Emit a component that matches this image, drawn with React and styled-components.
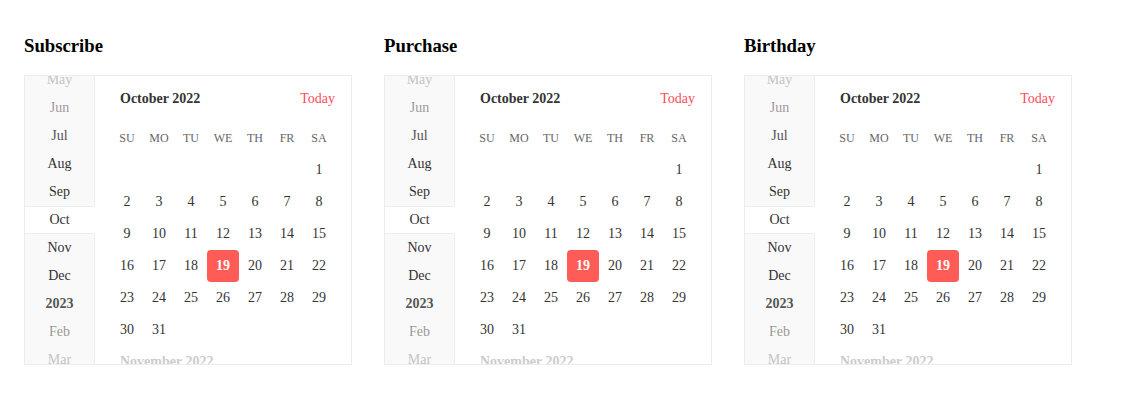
import React, { useLayoutEffect, useRef } from "react";
import styled, { createGlobalStyle } from "styled-components";

const GlobalStyle = createGlobalStyle`
    body {
        margin: 0;
        background: #fff;
        font-family: "Liberation Serif", "Times New Roman", serif;
        color: #333;
    }
`

const WEEKDAYS = ["SU", "MO", "TU", "WE", "TH", "FR", "SA"];

// month list shown in the left rail, year labels replace January
const MONTHS = [
    { label: "2022", year: true },
    { label: "Feb" }, { label: "Mar" }, { label: "Apr" }, { label: "May" },
    { label: "Jun" }, { label: "Jul" }, { label: "Aug" }, { label: "Sep" },
    { label: "Oct" }, { label: "Nov" }, { label: "Dec" },
    { label: "2023", year: true },
    { label: "Feb" }, { label: "Mar" }, { label: "Apr" }, { label: "May" },
];
const ACTIVE = 9;
const FADE = ["#333", "#333", "#333", "#555", "#999", "#c4c4c4", "#ddd"];

const buildDays = (offset, count) => {
    const cells = [];
    for (let i = 0; i < offset; i++) cells.push(null);
    for (let d = 1; d <= count; d++) cells.push(d);
    return cells;
}

const MonthRail = () => {
    const ref = useRef(null);

    useLayoutEffect(() => {
        if (ref.current) ref.current.scrollTop = 122;
    }, []);

    return (
        <Rail ref={ref}>
            {MONTHS.map((m, i) => {
                const dist = Math.min(Math.abs(i - ACTIVE), FADE.length - 1);
                return (
                    <RailItem key={i} $active={i === ACTIVE} $year={m.year} $color={FADE[dist]}>
                        {m.label}
                    </RailItem>
                )
            })}
        </Rail>
    )
}

const MonthGrid = ({ title, offset, count, selected, muted }) => {
    return (
        <>
            <MonthTitle $muted={muted}>{title}</MonthTitle>
            <DayGrid>
                {buildDays(offset, count).map((d, i) => (
                    <Day key={i} $selected={d === selected}>{d}</Day>
                ))}
            </DayGrid>
        </>
    )
}

const Picker = ({ title }) => {
    return (
        <Block>
            <Heading>{title}</Heading>
            <Card>
                <MonthRail />
                <Pane>
                    <Header>
                        <HeaderTitle>October 2022</HeaderTitle>
                        <TodayLink>Today</TodayLink>
                    </Header>
                    <Weekdays>
                        {WEEKDAYS.map(w => <Weekday key={w}>{w}</Weekday>)}
                    </Weekdays>
                    <Body>
                        <DayGrid>
                            {buildDays(6, 31).map((d, i) => (
                                <Day key={i} $selected={d === 19}>{d}</Day>
                            ))}
                        </DayGrid>
                        <MonthGrid title="November 2022" offset={2} count={30} muted />
                    </Body>
                </Pane>
            </Card>
        </Block>
    )
}

const App = () => {
    return (
        <>
            <GlobalStyle />
            <Page>
                <Picker title="Subscribe" />
                <Picker title="Purchase" />
                <Picker title="Birthday" />
            </Page>
        </>
    )
}

const Page = styled.div`
    display: flex;
    gap: 32px;
    padding: 35px 24px 0;
`

const Block = styled.div`
    display: flex;
    flex-direction: column;
`

const Heading = styled.h3`
    margin: 0 0 18px;
    font-size: 18.72px;
    line-height: 22px;
    font-weight: bold;
    color: #000;
`

const Card = styled.div`
    display: flex;
    width: 328px;
    height: 290px;
    box-sizing: border-box;
    border: 1px solid #ececec;
    background: #fff;
    overflow: hidden;
`

////////////////

const Rail = styled.div`
    width: 70px;
    flex-shrink: 0;
    overflow-y: auto;
    background: #f9f9f9;
    scrollbar-width: none;
    &::-webkit-scrollbar {
        display: none;
    }
`

const RailItem = styled.div`
    height: 28px;
    box-sizing: border-box;
    display: flex;
    align-items: center;
    justify-content: center;
    font-size: 14px;
    font-weight: ${p => p.$year ? "bold" : "normal"};
    color: ${p => p.$color};
    background: ${p => p.$active ? "#fff" : "transparent"};
    border-right: ${p => p.$active ? "1px solid transparent" : "1px solid #ececec"};
    border-top: ${p => p.$active ? "1px solid #ececec" : "none"};
    border-bottom: ${p => p.$active ? "1px solid #ececec" : "none"};
`

////////////////

const Pane = styled.div`
    flex: 1;
    display: flex;
    flex-direction: column;
    min-width: 0;
    padding: 0 15px 0 16px;
`

const Header = styled.div`
    display: flex;
    justify-content: space-between;
    align-items: center;
    height: 46px;
    padding: 0 1px 0 9px;
    flex-shrink: 0;
`

const HeaderTitle = styled.span`
    font-size: 14px;
    font-weight: bold;
    color: #333;
`

const TodayLink = styled.span`
    font-size: 14px;
    color: #ff4d5e;
    cursor: pointer;
`

const Weekdays = styled.div`
    display: grid;
    grid-template-columns: repeat(7, 32px);
    height: 32px;
    flex-shrink: 0;
`

const Weekday = styled.div`
    display: flex;
    align-items: center;
    justify-content: center;
    font-size: 12px;
    color: #666;
`

const Body = styled.div`
    flex: 1;
    overflow: hidden;
`

const MonthTitle = styled.div`
    height: 32px;
    display: flex;
    align-items: center;
    padding-left: 9px;
    font-size: 14px;
    font-weight: bold;
    color: ${p => p.$muted ? "#ccc" : "#333"};
`

const DayGrid = styled.div`
    display: grid;
    grid-template-columns: repeat(7, 32px);
    grid-auto-rows: 32px;
`

const Day = styled.div`
    display: flex;
    align-items: center;
    justify-content: center;
    font-size: 14px;
    border-radius: 4px;
    color: ${p => p.$selected ? "#fff" : "#333"};
    font-weight: ${p => p.$selected ? "bold" : "normal"};
    background: ${p => p.$selected ? "#ff5c57" : "transparent"};
`

export default App
